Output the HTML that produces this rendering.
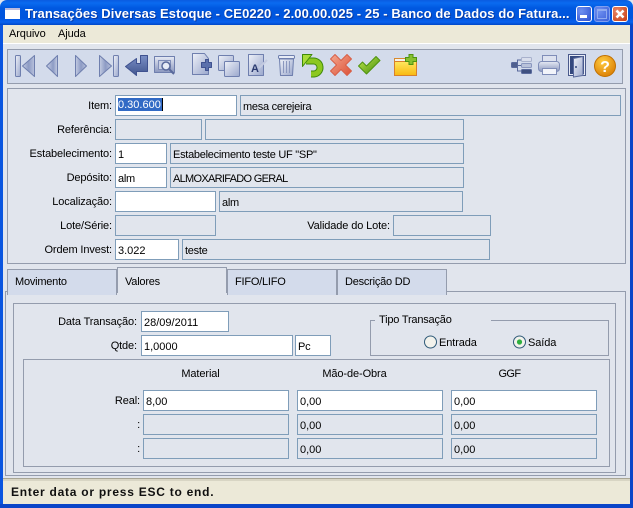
<!DOCTYPE html>
<html><head><meta charset="utf-8"><style>
html,body{margin:0;padding:0}
body{width:633px;height:508px;position:relative;overflow:hidden;background:#E1E5ED;font:11px "Liberation Sans",sans-serif;color:#000}
div{position:absolute;box-sizing:border-box;white-space:nowrap}
.f{height:21px;border:1px solid #7F9DB9;background:#E1E5ED;line-height:23px;padding-left:2px;letter-spacing:-.27px}
.w{background:#fff}
.n{letter-spacing:0}
.l{text-align:right;line-height:23px;height:21px;letter-spacing:-.12px}
.t{line-height:18px;height:16px;letter-spacing:-.1px}
.p{border:1px solid #949CAD}
.tab{background:#D3DBEB;border:1px solid #949CAD;border-bottom:0;line-height:25px;padding-left:7px;letter-spacing:-.22px}
</style></head><body>
<div style="left:0;top:0;width:633px;height:25px;background:linear-gradient(#0A5BE0 0,#0A6BF0 3px,#0058E0 8px,#0055DE 18px,#0A62EE 22px,#0048C8 25px);border-radius:7px 7px 0 0"></div>
<div style="left:0;top:25px;width:3px;height:483px;background:#0A55E0"></div>
<div style="left:630px;top:25px;width:3px;height:483px;background:#0A45C8"></div>
<div style="left:0;top:504px;width:633px;height:4px;background:#0A45C8"></div>
<div style="left:5px;top:8px;width:15px;height:11px;background:#fff;border-top:2px solid #BBD"></div>
<div style="left:25px;top:5px;font:bold 13px/17px 'Liberation Sans',sans-serif;color:#fff;letter-spacing:.1px;text-shadow:1px 1px 0 #0A3AA0">Transações Diversas Estoque - CE0220 - 2.00.00.025 - 25 - Banco de Dados do Fatura...</div>
<div style="left:576px;top:6px;width:16px;height:16px;border:1px solid #fff;border-radius:3px;background:radial-gradient(circle at 30% 30%,#6F90F0,#2A4FD0)"></div>
<div style="left:580px;top:15px;width:7px;height:3px;background:#fff"></div>
<div style="left:594px;top:6px;width:16px;height:16px;border:1px solid #7F9FF0;border-radius:3px;background:radial-gradient(circle at 30% 30%,#6F90F0,#3A5FD8)"></div>
<div style="left:597px;top:9px;width:10px;height:10px;border:1px solid #8FAAF0;border-top-width:2px"></div>
<div style="left:612px;top:6px;width:16px;height:16px;border:1px solid #fff;border-radius:3px;background:radial-gradient(circle at 30% 30%,#E88868,#C83A10)"></div>

<div style="left:3px;top:25px;width:627px;height:19px;background:#ECE9D8;border-bottom:1px solid #fff"></div>
<div class="t" style="left:9px;top:25px">Arquivo</div>
<div class="t" style="left:58px;top:25px">Ajuda</div>

<div class="p" style="left:7px;top:49px;width:616px;height:35px;background:#D3DBEB"></div>
<div class="p" style="left:7px;top:88px;width:619px;height:176px"></div>

<div class="l" style="left:20px;top:95px;width:92px">Item:</div>
<div class="f w n" style="left:115px;top:95px;width:122px"><span style="background:#316AC5;color:#fff;display:inline-block;height:13px;line-height:15px;width:45px;vertical-align:top;margin-top:2px;border-right:1px solid #000;box-sizing:border-box;overflow:hidden">0.30.600</span></div>
<div class="f" style="left:240px;top:95px;width:381px">mesa cerejeira</div>
<div class="l" style="left:20px;top:119px;width:92px">Referência:</div>
<div class="f" style="left:115px;top:119px;width:87px"></div>
<div class="f" style="left:205px;top:119px;width:259px"></div>
<div class="l" style="left:20px;top:143px;width:92px">Estabelecimento:</div>
<div class="f w n" style="left:115px;top:143px;width:52px">1</div>
<div class="f" style="left:170px;top:143px;width:294px">Estabelecimento teste UF "SP"</div>
<div class="l" style="left:20px;top:167px;width:92px">Depósito:</div>
<div class="f w" style="left:115px;top:167px;width:52px">alm</div>
<div class="f" style="left:170px;top:167px;width:294px;letter-spacing:-.7px">ALMOXARIFADO GERAL</div>
<div class="l" style="left:20px;top:191px;width:92px">Localização:</div>
<div class="f w" style="left:115px;top:191px;width:101px"></div>
<div class="f" style="left:219px;top:191px;width:244px">alm</div>
<div class="l" style="left:20px;top:215px;width:92px">Lote/Série:</div>
<div class="f" style="left:115px;top:215px;width:101px"></div>
<div class="l" style="left:290px;top:215px;width:100px">Validade do Lote:</div>
<div class="f" style="left:393px;top:215px;width:98px"></div>
<div class="l" style="left:20px;top:239px;width:92px">Ordem Invest:</div>
<div class="f w n" style="left:115px;top:239px;width:64px">3.022</div>
<div class="f" style="left:182px;top:239px;width:308px">teste</div>

<div class="p" style="left:5px;top:291px;width:621px;height:185px"></div>
<div class="tab" style="left:7px;top:269px;width:110px">Movimento</div>
<div class="tab" style="left:227px;top:269px;width:110px">FIFO/LIFO</div>
<div class="tab" style="left:337px;top:269px;width:110px">Descrição DD</div>
<div class="tab" style="left:117px;top:267px;width:110px;height:26px;background:#E1E5ED;line-height:29px">Valores</div>

<div class="p" style="left:13px;top:303px;width:603px;height:170px"></div>
<div class="l" style="left:40px;top:311px;width:97px">Data Transação:</div>
<div class="f w n" style="left:141px;top:311px;width:88px">28/09/2011</div>
<div class="l" style="left:40px;top:335px;width:97px">Qtde:</div>
<div class="f w n" style="left:141px;top:335px;width:152px">1,0000</div>
<div class="f w" style="left:295px;top:335px;width:36px">Pc</div>

<div class="p" style="left:370px;top:320px;width:239px;height:36px"></div>
<div class="t" style="left:375px;top:311px;width:116px;background:#E1E5ED;padding-left:4px;letter-spacing:-.2px">Tipo Transação</div>
<div class="t" style="left:439px;top:334px">Entrada</div>
<div class="t" style="left:528px;top:334px">Saída</div>

<div class="p" style="left:23px;top:359px;width:587px;height:108px"></div>
<div class="t" style="left:143px;top:365px;width:115px;text-align:center">Material</div>
<div class="t" style="left:297px;top:365px;width:115px;text-align:center">Mão-de-Obra</div>
<div class="t" style="left:452px;top:365px;width:115px;text-align:center;letter-spacing:-.6px">GGF</div>
<div class="l" style="left:90px;top:390px;width:50px">Real:</div>
<div class="l" style="left:90px;top:414px;width:50px">:</div>
<div class="l" style="left:90px;top:438px;width:50px">:</div>
<div class="f w n" style="left:143px;top:390px;width:146px">8,00</div>
<div class="f w n" style="left:297px;top:390px;width:146px">0,00</div>
<div class="f w n" style="left:451px;top:390px;width:146px">0,00</div>
<div class="f" style="left:143px;top:414px;width:146px"></div>
<div class="f n" style="left:297px;top:414px;width:146px">0,00</div>
<div class="f n" style="left:451px;top:414px;width:146px">0,00</div>
<div class="f" style="left:143px;top:438px;width:146px"></div>
<div class="f n" style="left:297px;top:438px;width:146px">0,00</div>
<div class="f n" style="left:451px;top:438px;width:146px">0,00</div>

<div style="left:3px;top:478px;width:627px;height:26px;background:#ECE9D8;border-top:1px solid #A8A594;box-shadow:inset 0 2px 0 #D8D5C4"></div>
<div style="left:11px;top:484px;font:bold 12px/17px 'Liberation Sans',sans-serif;letter-spacing:.75px;color:#101010">Enter data or press ESC to end.</div>

<svg width="633" height="508" viewBox="0 0 633 508" style="position:absolute;left:0;top:0">
<defs>
<linearGradient id="a" x1="0" y1="0" x2="1" y2="1"><stop offset="0" stop-color="#EEF1F8"/><stop offset="1" stop-color="#9AA7CC"/></linearGradient>
<linearGradient id="b" x1="0" y1="0" x2="1" y2="0"><stop offset="0" stop-color="#C9D0E6"/><stop offset=".6" stop-color="#8D9BC4"/><stop offset="1" stop-color="#C4CCE2"/></linearGradient>
<linearGradient id="c" x1="0" y1="0" x2="1" y2="0"><stop offset="0" stop-color="#C4CCE2"/><stop offset=".5" stop-color="#8D9BC4"/><stop offset="1" stop-color="#B9C2DC"/></linearGradient>
<linearGradient id="bl" x1="0" y1="0" x2="0" y2="1"><stop offset="0" stop-color="#7A8FC6"/><stop offset="1" stop-color="#41568F"/></linearGradient>
<linearGradient id="g" x1="0" y1="0" x2="1" y2="1"><stop offset="0" stop-color="#C6EA50"/><stop offset="1" stop-color="#3F8A08"/></linearGradient>
<linearGradient id="r" x1="0" y1="0" x2="1" y2="1"><stop offset="0" stop-color="#F4A890"/><stop offset="1" stop-color="#DC5036"/></linearGradient>
<linearGradient id="y" x1="0" y1="0" x2="0" y2="1"><stop offset="0" stop-color="#FFE860"/><stop offset="1" stop-color="#F8B810"/></linearGradient>
<radialGradient id="o" cx=".4" cy=".3" r=".8"><stop offset="0" stop-color="#FFCC40"/><stop offset="1" stop-color="#D87800"/></radialGradient>
<linearGradient id="pr" x1="0" y1="0" x2="0" y2="1"><stop offset="0" stop-color="#E6EAF4"/><stop offset="1" stop-color="#8A97BE"/></linearGradient>
</defs>
<g stroke="#6F7FAE" stroke-width="1" stroke-linejoin="round">
<rect x="15.5" y="55.5" width="5" height="21" rx="1" fill="url(#a)"/>
<path d="M22.5 66 L34.5 55.5 V76.5 Z" fill="url(#c)"/>
<path d="M46.5 66 L57.5 55.5 V76.5 Z" fill="url(#b)"/>
<path d="M86.5 66 L75.5 55.5 V76.5 Z" fill="url(#c)"/>
<path d="M111.5 66 L99.5 55.5 V76.5 Z" fill="url(#c)"/>
<rect x="113.5" y="55.5" width="5" height="21" rx="1" fill="url(#a)"/>
<path d="M125.5 66.5 L136.5 58.5 V63.5 H140.5 V55.5 H147.5 V71.5 H136.5 V75.5 Z" fill="url(#bl)" stroke="#3F5290"/>
<rect x="154.5" y="56.5" width="20" height="16" fill="url(#pr)"/>
<rect x="158.5" y="60.5" width="12" height="9" fill="#C9D0E4" stroke="#7F8DB8"/>
<circle cx="166" cy="66" r="4" fill="#E8ECF6" stroke="#5A6A9C" stroke-width="1.5"/>
<path d="M169 69 L174 74" stroke="#5A6A9C" stroke-width="2"/>
<path d="M192.5 53.5 H204.5 L208.5 58.5 V74.5 H192.5 Z" fill="url(#a)"/>
<path d="M201.5 62.5 H205.5 V59.5 H208.5 V62.5 H211.5 V67.5 H208.5 V70.5 H205.5 V67.5 H201.5 Z" fill="#5A70AC" stroke="#3F5290"/>
<rect x="218.5" y="55.5" width="15" height="15" rx="1" fill="url(#a)"/>
<rect x="224.5" y="61.5" width="15" height="15" rx="1" fill="url(#a)"/>
<path d="M248.5 54.5 H263.5 V75.5 H248.5 Z" fill="url(#a)"/>
<path d="M261 66 L267 60 M261 66 L259 68" stroke="#C4CBE0" stroke-width="2"/>
<rect x="278.5" y="55.5" width="16" height="3" rx="1" fill="#E8ECF6"/>
<path d="M279.5 59 H293.5 L292.5 75.5 H280.5 Z" fill="url(#a)"/>
<path d="M283.5 61 V73 M286.5 61 V73 M289.5 61 V73" stroke="#8A97BE"/>
</g>
<text x="251" y="72" font-family="Liberation Sans" font-weight="bold" font-size="11" fill="#2A3A70">A</text>
<path d="M306 61 H313 A6.5 6.5 0 0 1 314 74 H311" fill="none" stroke="#3F8A08" stroke-width="7"/>
<path d="M306 61 H313 A6.5 6.5 0 0 1 314 74 H311" fill="none" stroke="#8CC820" stroke-width="5"/>
<path d="M302.5 54.5 L312 54.5 L302.5 66.5 Z" fill="#A8DC38" stroke="#3F8A08" stroke-linejoin="round"/>
<path d="M330.5 59 L335 54.5 L341 60.5 L347 54.5 L351.5 59 L345.5 65 L351.5 71 L347 75.5 L341 69.5 L335 75.5 L330.5 71 L336.5 65 Z" fill="url(#r)" stroke="#D86048" stroke-linejoin="round"/>
<path d="M358.5 66 L362.5 62 L366.5 66 L376 56.5 L380 60.5 L366.5 74 Z" fill="url(#g)" stroke="#4F9410" stroke-linejoin="round"/>
<path d="M394.5 58.5 H408 V75.5 H394.5 Z" fill="#F6F2E8" stroke="#D88A30"/>
<path d="M394.5 61.5 H416.5 V75.5 H394.5 Z" fill="url(#y)" stroke="#D8802A"/>
<path d="M405.5 57.5 H409 V54.5 H413 V57.5 H416.5 V61.5 H413 V64.5 H409 V61.5 H405.5 Z" fill="#88C030" stroke="#4F9410"/>
<g stroke="#5A6A9C" fill="none">
<path d="M521 60 H517.5 V71 H521 M517.5 65.5 H521 M517 65.5 H513"/>
<rect x="511.5" y="62.5" width="6" height="5" rx="1" fill="#4F608F"/>
<rect x="521.5" y="57.5" width="10" height="4" rx="1" fill="#D9DEEC" stroke="#A8B1CC"/>
<rect x="521.5" y="63.5" width="10" height="4" rx="1" fill="#B9C2DA" stroke="#8A97BE"/>
<rect x="521.5" y="69.5" width="10" height="4" rx="1" fill="#3F5080"/>
</g>
<g stroke="#7F8DB8">
<rect x="542.5" y="55.5" width="14" height="7" fill="#DDE2EF"/>
<rect x="538.5" y="61.5" width="21" height="10" rx="3" fill="url(#pr)"/>
<rect x="542.5" y="68.5" width="14" height="6" fill="#F2F4FA"/>
</g>
<rect x="568.5" y="54.5" width="17" height="21" fill="#E8ECF6" stroke="#4A5A8C"/>
<rect x="570" y="56" width="14" height="18" fill="#34487E"/>
<path d="M573.5 58.5 L583 56.5 V75.5 L573.5 77 Z" fill="url(#a)" stroke="#5A6A9C"/>
<circle cx="576" cy="67" r="1" fill="#34487E"/>
<circle cx="605" cy="66" r="10.5" fill="url(#o)" stroke="#C07000"/>
<text x="605" y="72" text-anchor="middle" font-family="Liberation Sans" font-weight="bold" font-size="16" fill="#fff">?</text>
<circle cx="430.5" cy="342" r="6" fill="#F2F2EC" stroke="#2F5A78"/>
<circle cx="519.5" cy="342" r="6" fill="#F2F2EC" stroke="#2F5A78"/>
<circle cx="519.5" cy="342" r="2.6" fill="#2FB040"/>
<path d="M616.5 10.5 L623.5 17.5 M623.5 10.5 L616.5 17.5" stroke="#fff" stroke-width="2.6"/>
</svg>
</body></html>
